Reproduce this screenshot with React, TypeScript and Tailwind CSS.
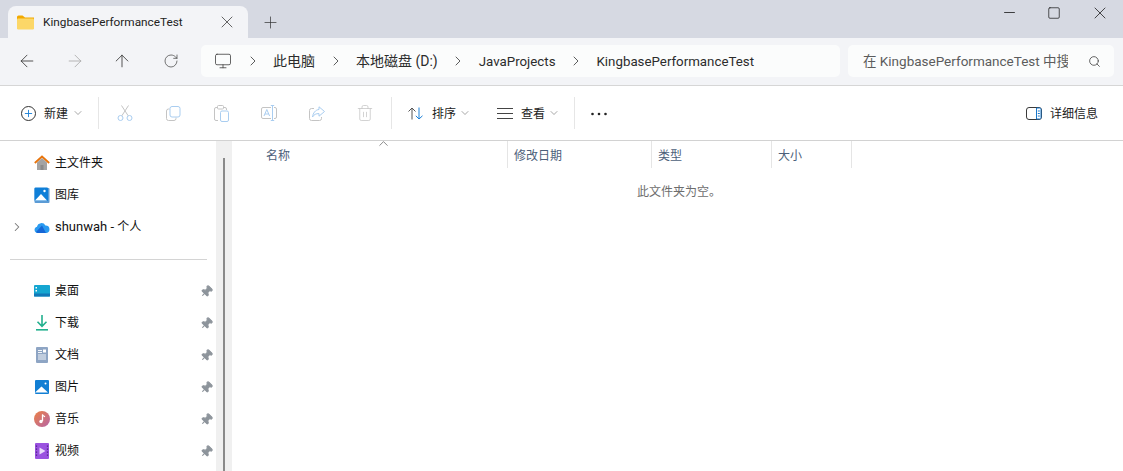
import { ArrowLeft, ArrowRight, ArrowUp, ChevronDown, ChevronRight, ChevronUp, Minus, Monitor, Pin, Plus, RotateCw, Search, Square, Trash2, X } from "lucide-react";
import type { ReactNode } from "react";

const font = "font-['Roboto','Noto_Sans_CJK_SC',sans-serif]";

function Folder() {
  return (
    <svg width="17" height="15" viewBox="0 0 17 15">
      <path d="M0 2a1.5 1.5 0 0 1 1.5-1.5h4L8 2.500h9V5H0z" fill="#f2a900" />
      <rect x="0" y="3.500" width="17" height="11" rx="1.200" fill="#fcd768" />
    </svg>
  );
}

function HomeIcon() {
  return (
    <svg width="16" height="16" viewBox="0 0 16 16">
      <path d="M3 7.500 8 3l5 4.500V15H3z" fill="#a3a3a3" />
      <rect x="6.500" y="10" width="3" height="5" fill="#8a8a8a" />
      <path d="M.8 8 8 1.500 15.200 8" fill="none" stroke="#e8740c" strokeWidth="1.800" />
    </svg>
  );
}

function GalleryIcon() {
  return (
    <svg width="16" height="16" viewBox="0 0 16 16">
      <rect x="0.500" y="1" width="15" height="15" rx="1" fill="#5b9bd5" />
      <rect x="0.500" y="0.500" width="13.500" height="13.500" rx="1" fill="#0f7fd8" />
      <circle cx="10.500" cy="4" r="1.200" fill="#fff" />
      <path d="M1 13.500 7 7l6 6.500z" fill="#fff" />
    </svg>
  );
}

function CloudIcon() {
  return (
    <svg width="16" height="11" viewBox="0 0 16 11">
      <path d="M3.500 11A3.200 3.200 0 0 1 3 4.700 4.500 4.500 0 0 1 11.400 3.500 3.800 3.800 0 0 1 12.500 11z" fill="#2a9af0" />
      <path d="M2 10 8 3.500 12 11H3.500z" fill="#1566d6" />
    </svg>
  );
}

function DesktopIcon() {
  return (
    <svg width="16" height="12" viewBox="0 0 16 12">
      <rect width="16" height="11.500" rx="1" fill="#15a6d1" />
      <rect width="16" height="3" y="8.500" fill="#1278b8" />
      <rect x="1.500" y="2" width="1.500" height="1.500" fill="#fff" />
      <rect x="1.500" y="5" width="1.500" height="1.500" fill="#fff" />
    </svg>
  );
}

function DownloadIcon() {
  return (
    <svg width="12" height="16" viewBox="0 0 12 16">
      <path d="M6 0v11M1.500 6.800 6 11.300l4.500-4.500" fill="none" stroke="#22b08e" strokeWidth="1.600" />
      <rect y="14" width="12" height="1.600" fill="#22b08e" />
    </svg>
  );
}

function DocumentIcon() {
  return (
    <svg width="12" height="16" viewBox="0 0 12 16">
      <rect width="12" height="16" rx="1" fill="#8ea5c4" />
      <path d="M2 3.500h4M2 5.500h4M2 8h8M2 10h8M2 12h8" stroke="#fff" strokeWidth="0.900" />
      <rect x="7" y="2.500" width="3" height="3" fill="#fff" />
    </svg>
  );
}

function PictureIcon() {
  return (
    <svg width="14" height="14" viewBox="0 0 14 14">
      <rect width="14" height="14" rx="1" fill="#127fd4" />
      <circle cx="10.500" cy="3.500" r="1" fill="#fff" />
      <path d="M0 12.500 6.500 6.500l6.500 6z" fill="#fff" />
    </svg>
  );
}

function MusicIcon() {
  return (
    <svg width="16" height="16" viewBox="0 0 16 16">
      <defs>
        <linearGradient id="music" x1="0" y1="0" x2="1" y2="1">
          <stop offset="0" stopColor="#ec8044" />
          <stop offset="1" stopColor="#b566a8" />
        </linearGradient>
      </defs>
      <circle cx="8" cy="8" r="8" fill="url(#music)" />
      <path d="M8.500 3.500v6.500" stroke="#fff" strokeWidth="1.300" />
      <path d="M8.500 3.500c.3 1.500 1.800 1.500 2.300 2.500" fill="none" stroke="#fff" strokeWidth="1.100" />
      <circle cx="7" cy="10.500" r="1.700" fill="#fff" />
    </svg>
  );
}

function VideoIcon() {
  return (
    <svg width="14" height="16" viewBox="0 0 14 16">
      <rect width="14" height="16" rx="1" fill="#9a52e0" />
      <path d="M4.500 4.500v7l6-3.500z" fill="#eadcfb" />
      <path d="M1.500 2.500v11M12.500 2.500v11" stroke="#4a2180" strokeWidth="1.300" strokeDasharray="1.300 1.700" />
    </svg>
  );
}

function CutIcon() {
  return (
    <svg width="16" height="16" viewBox="0 0 16 16" fill="none" stroke="#a9cdf0">
      <circle cx="3.500" cy="13" r="2.500" />
      <circle cx="12.500" cy="13" r="2.500" />
      <path d="M4.800 10.800 11.500.5M11.200 10.800 4.500.5" stroke="#c4c4c4" />
    </svg>
  );
}

function CopyIcon() {
  return (
    <svg width="15" height="15" viewBox="0 0 15 15" fill="none">
      <path d="M3.500 3H2.500a2 2 0 0 0-2 2v7.500a2 2 0 0 0 2 2H8a2 2 0 0 0 2-2v-1" stroke="#c4c4c4" />
      <rect x="4" y="0.500" width="10" height="10.500" rx="2" stroke="#a9cdf0" />
    </svg>
  );
}

function PasteIcon() {
  return (
    <svg width="15" height="17" viewBox="0 0 15 17" fill="none">
      <path d="M3 2.500H2a1.500 1.500 0 0 0-1.500 1.500v10A1.500 1.500 0 0 0 2 15.500h2M10 2.500h1A1.500 1.500 0 0 1 12.500 4v1" stroke="#c4c4c4" />
      <rect x="3.500" y="0.500" width="6" height="3.500" rx="1" stroke="#c4c4c4" />
      <rect x="6.500" y="6" width="8" height="10.500" rx="1.500" stroke="#a9cdf0" />
    </svg>
  );
}

function RenameIcon() {
  return (
    <svg width="16" height="16" viewBox="0 0 16 16" fill="none">
      <path d="M10 2.500H2a1.500 1.500 0 0 0-1.500 1.500v8A1.500 1.500 0 0 0 2 13.500h8" stroke="#c4c4c4" />
      <path d="M13 2.500h1A1.500 1.500 0 0 1 15.500 4v8a1.500 1.500 0 0 1-1.500 1.500h-1" stroke="#c4c4c4" />
      <path d="M11.500.5v15M9.800.5h3.400M9.800 15.500h3.400" stroke="#a9cdf0" />
      <path d="M3 11 5.800 4.500 8.600 11M4 9h3.600" stroke="#a9cdf0" />
    </svg>
  );
}

function ShareIcon() {
  return (
    <svg width="16" height="15" viewBox="0 0 16 15" fill="none">
      <path d="M5 2.500H2.500a2 2 0 0 0-2 2v8a2 2 0 0 0 2 2h8a2 2 0 0 0 2-2V11" stroke="#c4c4c4" />
      <path d="M10 .8 15.500 5.500 10 10.200V7.600C7 7.500 5 8.500 3.500 11 4 7 6.500 3.800 10 3.500z" stroke="#a9cdf0" />
    </svg>
  );
}

function DetailsIcon() {
  return (
    <svg width="16" height="13" viewBox="0 0 16 13" fill="none">
      <rect x="0.500" y="0.500" width="15" height="12" rx="2.500" stroke="#3a3a3a" />
      <path d="M10.500 1h3a1.500 1.500 0 0 1 1.500 1.500v8a1.500 1.500 0 0 1-1.500 1.500h-3z" fill="#fff" stroke="#1976c9" />
      <path d="M11.800 4h2M11.800 6.500h2M11.800 9h2" stroke="#1976c9" />
    </svg>
  );
}

function SortIcon() {
  return (
    <svg width="16" height="13" viewBox="0 0 16 13" fill="none">
      <path d="M4 12.500V1M.5 4.500 4 1l3.500 3.500" stroke="#555" />
      <path d="M11 .5V12M7.800 8.800 11 12l3.500-3.200" stroke="#1a80d8" />
    </svg>
  );
}

function ViewIcon() {
  return (
    <svg width="16" height="11" viewBox="0 0 16 11" fill="none" stroke="#444">
      <path d="M0 .5h16M0 5.500h16M0 10.500h16" />
    </svg>
  );
}

function MoreIcon() {
  return (
    <svg width="16" height="4" viewBox="0 0 16 4" fill="#222">
      <circle cx="1.500" cy="2" r="1.300" />
      <circle cx="8" cy="2" r="1.300" />
      <circle cx="14.500" cy="2" r="1.300" />
    </svg>
  );
}

function NewIcon() {
  return (
    <span className="flex h-[15px] w-[15px] items-center justify-center rounded-full border border-[#333]">
      <Plus size={11} strokeWidth={2} className="text-[#1a80d8]" />
    </span>
  );
}

function Crumb({ children, cjk }: { children: ReactNode; cjk?: boolean }) {
  return (
    <>
      <ChevronRight size={16} strokeWidth={1.200} className="text-[#333]" />
      <span className={cjk ? "text-[14px] text-[#2c2c2c]" : "pt-[1px] text-[13.300px] text-[#2c2c2c]"}>{children}</span>
    </>
  );
}

function ToolSlot({ children }: { children: ReactNode }) {
  return <span className="flex w-[48px] justify-center">{children}</span>;
}

function Divider({ className }: { className: string }) {
  return <span className={`block h-[32px] w-px bg-[#e6e6e6] ${className}`} />;
}

function Caret({ className = "ml-[3px]" }: { className?: string }) {
  return <ChevronDown size={12} strokeWidth={1.300} className={`text-[#777] ${className}`} />;
}

function NavItem({ icon, label, pinned, chevron }: { icon: ReactNode; label: ReactNode; pinned?: boolean; chevron?: boolean }) {
  return (
    <div className="flex h-[32px] items-center">
      <span className="flex w-[34px] justify-center pl-[1px]">
        {chevron && <ChevronRight size={14} strokeWidth={1.800} className="-ml-[2px] text-[#777]" />}
      </span>
      <span className="flex w-[16px] justify-center">{icon}</span>
      <span className="ml-[5px] flex-1 text-[12px] text-[#111]">{label}</span>
      {pinned && <Pin size={13} strokeWidth={2} fill="#8d949b" className="mr-[3px] rotate-45 text-[#8d949b]" />}
    </div>
  );
}

export default function App() {
  return (
    <div className={`flex h-[471px] w-[1123px] flex-col overflow-hidden bg-white ${font}`}>
      {/* Title bar */}
      <div className="flex h-[38px] shrink-0 items-end bg-[#d6d9e2] pl-[8px]">
        <div className="flex h-[32px] w-[240px] items-center rounded-t-[8px] bg-[#f3f4f7] pl-[9px] pr-[11px]">
          <Folder />
          <span className="ml-[9px] flex-1 pt-[1px] text-[11.800px] text-[#222]">KingbasePerformanceTest</span>
          <X size={20} strokeWidth={0.900} className="text-[#333]" />
        </div>
        <span className="ml-[13px] flex h-[32px] items-center">
          <Plus size={19} strokeWidth={0.900} className="text-[#333]" />
        </span>
        <div className="ml-auto flex h-full items-start pr-[13px] pt-[3px] text-[#111]">
          <Minus size={17} strokeWidth={1.100} className="mr-[29px] mt-[1px]" />
          <Square size={14} strokeWidth={1.200} className="mr-[29px] mt-[3px]" />
          <X size={20} strokeWidth={0.900} />
        </div>
      </div>

      {/* Address bar */}
      <div className="flex h-[48px] shrink-0 items-center border-b border-[#d6d6d6] bg-[#f3f4f7] pl-[17px] pr-[9px] pb-[1px]">
        <ArrowLeft size={20} strokeWidth={1} className="text-[#333]" />
        <ArrowRight size={20} strokeWidth={1} className="ml-[28px] text-[#a8a8a8]" />
        <ArrowUp size={20} strokeWidth={1} className="ml-[27px] text-[#333]" />
        <RotateCw size={16} strokeWidth={1.100} className="ml-[31px] text-[#444]" />
        <div className="ml-[22px] flex h-[32px] w-[639px] items-center gap-[12.500px] rounded-[5px] bg-[#fbfcfc] pl-[13px]">
          <Monitor size={18} strokeWidth={1.100} className="text-[#444]" />
          <Crumb cjk>此电脑</Crumb>
          <Crumb cjk>本地磁盘 (D:)</Crumb>
          <Crumb>JavaProjects</Crumb>
          <Crumb>KingbasePerformanceTest</Crumb>
        </div>
        <div className="ml-[8px] flex h-[32px] flex-1 items-center rounded-[5px] bg-[#fbfcfc] pl-[15px] pr-[13px]">
          <span className="w-[205px] overflow-hidden whitespace-nowrap text-[13.500px] text-[#5c5c5c]">在 KingbasePerformanceTest 中搜索</span>
          <Search size={13} strokeWidth={1.500} className="ml-auto text-[#444]" />
        </div>
      </div>

      {/* Command bar */}
      <div className="flex h-[55px] shrink-0 items-center border-b border-[#d2d2d2] pl-[21px] pr-[25px] text-[12px] text-[#222]">
        <NewIcon />
        <span className="ml-[8px] pt-[1px]">新建</span>
        <Caret className="ml-[4px]" />
        <Divider className="ml-[14px]" />
        <span className="ml-[2px] flex items-center">
          <ToolSlot><CutIcon /></ToolSlot>
          <ToolSlot><CopyIcon /></ToolSlot>
          <ToolSlot><PasteIcon /></ToolSlot>
          <ToolSlot><RenameIcon /></ToolSlot>
          <ToolSlot><ShareIcon /></ToolSlot>
          <ToolSlot><Trash2 size={18} strokeWidth={1} className="text-[#c4c4c4]" /></ToolSlot>
        </span>
        <Divider className="ml-[2px]" />
        <span className="ml-[16px]"><SortIcon /></span>
        <span className="ml-[8px] pt-[1px]">排序</span>
        <Caret />
        <span className="ml-[26px]"><ViewIcon /></span>
        <span className="ml-[8px] pt-[1px]">查看</span>
        <Caret />
        <Divider className="ml-[14px]" />
        <span className="ml-[16px] pt-[1px]"><MoreIcon /></span>
        <span className="ml-auto"><DetailsIcon /></span>
        <span className="ml-[8px] pt-[1px]">详细信息</span>
      </div>

      {/* Body */}
      <div className="flex min-h-0 flex-1">
        <aside className="w-[216px] shrink-0 pt-[6px]">
          <NavItem icon={<HomeIcon />} label="主文件夹" />
          <NavItem icon={<GalleryIcon />} label="图库" />
          <NavItem icon={<CloudIcon />} label={<><span className="text-[13px]">shunwah - </span>个人</>} chevron />
          <div className="mb-[15px] ml-[10px] mr-[9px] mt-[16px] h-px bg-[#d4d4d4]" />
          <NavItem icon={<DesktopIcon />} label="桌面" pinned />
          <NavItem icon={<DownloadIcon />} label="下载" pinned />
          <NavItem icon={<DocumentIcon />} label="文档" pinned />
          <NavItem icon={<PictureIcon />} label="图片" pinned />
          <NavItem icon={<MusicIcon />} label="音乐" pinned />
          <NavItem icon={<VideoIcon />} label="视频" pinned />
        </aside>
        <div className="flex w-[16px] shrink-0 justify-center bg-[#f0f0f0] pt-[17px]">
          <span className="h-full w-[2px] bg-[#8a8a8a]" />
        </div>
        <main className="flex-1">
          <div className="flex h-[27px] text-[12px] text-[#4c607a]">
            <div className="relative flex w-[276px] items-center border-r border-[#e5e5e5] pl-[34px] pt-[2px]">
              名称
              <ChevronUp size={15} strokeWidth={1} className="absolute left-[144px] top-[-5px] text-[#444]" />
            </div>
            <div className="flex w-[144px] items-center border-r border-[#e5e5e5] pl-[6px] pt-[2px]">修改日期</div>
            <div className="flex w-[120px] items-center border-r border-[#e5e5e5] pl-[6px] pt-[2px]">类型</div>
            <div className="flex w-[80px] items-center border-r border-[#e5e5e5] pl-[6px] pt-[2px]">大小</div>
          </div>
          <p className="mt-[15px] pl-[405px] text-[12px] text-[#6d6d6d]">此文件夹为空。</p>
        </main>
      </div>
    </div>
  );
}
